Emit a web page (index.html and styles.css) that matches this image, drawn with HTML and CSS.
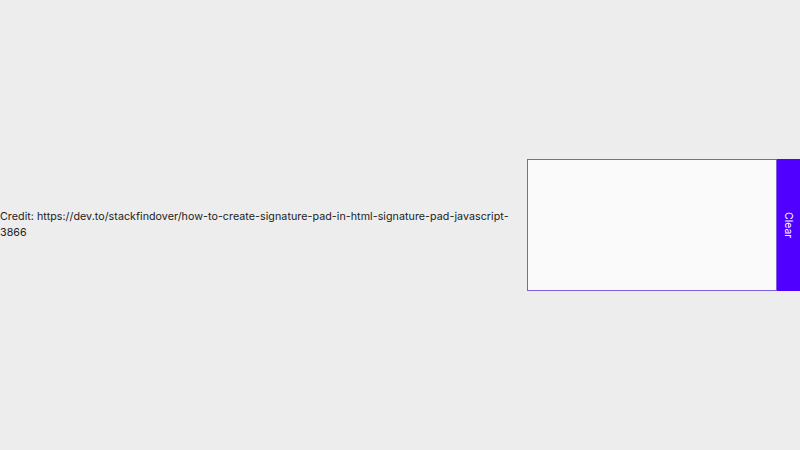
FILE: index.html
```html
<!DOCTYPE html>
<html>
<head>
<meta charset="utf-8">
<link rel="stylesheet" href="styles.css">
</head>
<body>
<div class="page">
  <p class="credit">Credit: https://dev.to/stackfindover/how-to-create-signature-pad-in-html-signature-pad-javascript-3866</p>
  <div class="sig">
    <div class="pad"></div>
    <button class="clear"><span>Clear</span></button>
  </div>
</div>
</body>
</html>
```
FILE: styles.css
```css
html, body {
  margin: 0;
  padding: 0;
  background: #ededed;
  height: 100%;
  overflow: hidden;
}
.page {
  height: 450px;
  display: flex;
  align-items: center;
  font-family: "Inter", "Noto Sans", sans-serif;
}
.credit {
  flex: 0 0 520px;
  margin: 0;
  font-size: 10.7px;
  letter-spacing: 0.05px;
  line-height: 16px;
  color: #222;
}
.sig {
  display: flex;
  margin-left: 7px;
}
.pad {
  width: 248px;
  height: 130px;
  background: #fafafa;
  border: 1px solid #7d5fd9;
}
.clear {
  width: 23px;
  height: 132px;
  border: 0;
  padding: 0;
  background: #5000ff;
  color: #fff;
  display: flex;
  align-items: center;
  justify-content: center;
  font-family: "Inter", sans-serif;
  font-size: 10.5px;
}
.clear span {
  writing-mode: vertical-rl;
}
```
